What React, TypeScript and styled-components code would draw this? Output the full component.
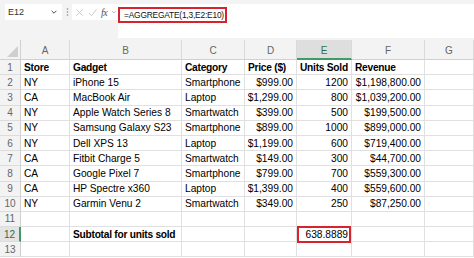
import React from "react";
import styled, { createGlobalStyle } from "styled-components";

const GlobalStyle = createGlobalStyle`
  html, body {
    margin: 0;
    padding: 0;
    background: #ffffff;
    overflow: hidden;
  }
  body {
    font-family: "Liberation Sans", Arial, sans-serif;
  }
`;

const Page = styled.div`
  width: 474px;
  height: 258px;
  overflow: hidden;
  background: #ffffff;
`;

const TopBar = styled.div`
  height: 40px;
  box-sizing: border-box;
  padding-top: 4px;
  background: #f3f3f3;
  display: flex;
  align-items: flex-start;
`;

const NameBox = styled.div`
  margin-left: 5px;
  width: 57px;
  height: 16px;
  box-sizing: border-box;
  padding: 0 4px 0 3px;
  background: #ffffff;
  display: flex;
  align-items: center;
  justify-content: space-between;
  font-size: 9px;
  color: #333333;
`;

const Grip = styled.div`
  width: 10px;
  height: 16px;
  display: flex;
  align-items: center;
  justify-content: center;
`;

const FxBox = styled.div`
  width: 46px;
  height: 16px;
  background: #ffffff;
  display: flex;
  align-items: center;
  gap: 4px;
  padding-left: 3px;
  box-sizing: border-box;
`;

const Fx = styled.span`
  font-family: "Liberation Serif", "Times New Roman", serif;
  font-style: italic;
  font-size: 10px;
  color: #555555;
  letter-spacing: -0.5px;
`;

const FormulaArea = styled.div`
  flex: 1;
  height: 34px;
  background: #ffffff;
`;

const FormulaText = styled.div`
  position: relative;
  display: inline-flex;
  align-items: center;
  height: 16px;
  box-sizing: border-box;
  padding: 0 3px 0 6px;
  font-size: 8.4px;
  letter-spacing: -0.2px;
  color: #111111;
  &::after {
    content: "";
    position: absolute;
    inset: 0;
    border: 2px solid #d7232e;
  }
`;

const Sheet = styled.div`
  display: grid;
  grid-template-columns: 21px 49px 112px 63px 52px 55px 73px 1fr;
  grid-template-rows: 20px;
  grid-auto-rows: 15.2px;
`;

const Corner = styled.div`
  background: #f3f3f3;
  border-right: 1px solid #d0d0d0;
  border-bottom: 1px solid #d0d0d0;
  box-sizing: border-box;
  display: flex;
  align-items: flex-end;
  justify-content: flex-end;
  padding: 0 2px 2px 0;
`;

const ColHeader = styled.div<{ $active?: boolean }>`
  background: ${(p) => (p.$active ? "#dedede" : "#f3f3f3")};
  border-right: 1px solid #dadada;
  border-bottom: ${(p) => (p.$active ? "2px solid #3f9a65" : "1px solid #d0d0d0")};
  box-sizing: border-box;
  display: flex;
  align-items: center;
  justify-content: center;
  padding-top: 2px;
  font-size: 10px;
  color: ${(p) => (p.$active ? "#2d6e48" : "#666666")};
`;

const RowHeader = styled.div<{ $active?: boolean }>`
  background: ${(p) => (p.$active ? "#e4e4e4" : "#f3f3f3")};
  border-right: ${(p) => (p.$active ? "2px solid #3f9a65" : "1px solid #d0d0d0")};
  border-bottom: 1px solid #dcdcdc;
  box-sizing: border-box;
  display: flex;
  align-items: center;
  justify-content: center;
  font-size: 10px;
  color: ${(p) => (p.$active ? "#2d6e48" : "#666666")};
`;

const Cell = styled.div<{ $right?: boolean; $bold?: boolean; $marked?: boolean }>`
  position: relative;
  border-right: 1px solid #e0e0e0;
  border-bottom: 1px solid #e0e0e0;
  box-sizing: border-box;
  display: flex;
  align-items: center;
  justify-content: ${(p) => (p.$right ? "flex-end" : "flex-start")};
  padding: ${(p) => (p.$right ? "0 3px 0 0" : "0 0 0 3px")};
  white-space: nowrap;
  overflow: visible;
  font-size: 10.2px;
  font-weight: ${(p) => (p.$bold ? 700 : 400)};
  letter-spacing: ${(p) => (p.$bold ? "-0.25px" : "0")};
  color: #000000;
  ${(p) =>
    p.$marked &&
    `
    &::after {
      content: "";
      position: absolute;
      left: 0;
      right: 0;
      top: -1px;
      bottom: -2px;
      border: 2px solid #d7232e;
    }
  `}
`;

const columns = ["A", "B", "C", "D", "E", "F", "G"];

type Row = { values: string[]; bold?: boolean };

const rows: Row[] = [
  { values: ["Store", "Gadget", "Category", "Price ($)", "Units Sold", "Revenue", ""], bold: true },
  { values: ["NY", "iPhone 15", "Smartphone", "$999.00", "1200", "$1,198,800.00", ""] },
  { values: ["CA", "MacBook Air", "Laptop", "$1,299.00", "800", "$1,039,200.00", ""] },
  { values: ["NY", "Apple Watch Series 8", "Smartwatch", "$399.00", "500", "$199,500.00", ""] },
  { values: ["NY", "Samsung Galaxy S23", "Smartphone", "$899.00", "1000", "$899,000.00", ""] },
  { values: ["NY", "Dell XPS 13", "Laptop", "$1,199.00", "600", "$719,400.00", ""] },
  { values: ["CA", "Fitbit Charge 5", "Smartwatch", "$149.00", "300", "$44,700.00", ""] },
  { values: ["CA", "Google Pixel 7", "Smartphone", "$799.00", "700", "$559,300.00", ""] },
  { values: ["CA", "HP Spectre x360", "Laptop", "$1,399.00", "400", "$559,600.00", ""] },
  { values: ["NY", "Garmin Venu 2", "Smartwatch", "$349.00", "250", "$87,250.00", ""] },
  { values: ["", "", "", "", "", "", ""] },
  { values: ["", "Subtotal for units sold", "", "", "638.8889", "", ""] },
  { values: ["", "", "", "", "", "", ""] },
];

const Chevron = ({ size = 7, color = "#555" }: { size?: number; color?: string }) => (
  <svg width={size} height={size} viewBox="0 0 10 10">
    <path d="M2 3.5 L5 6.5 L8 3.5" fill="none" stroke={color} strokeWidth="1.2" />
  </svg>
);

const App = () => (
  <Page>
    <GlobalStyle />
    <TopBar>
      <NameBox>
        <span>E12</span>
        <Chevron size={8} color="#444" />
      </NameBox>
      <Grip>
        <svg width="3" height="10" viewBox="0 0 3 10">
          <circle cx="1.5" cy="2" r="0.8" fill="#8a8a8a" />
          <circle cx="1.5" cy="5" r="0.8" fill="#8a8a8a" />
          <circle cx="1.5" cy="8" r="0.8" fill="#8a8a8a" />
        </svg>
      </Grip>
      <FxBox>
        <svg width="9" height="9" viewBox="0 0 10 10">
          <path d="M1.5 1.5 L8.5 8.5 M8.5 1.5 L1.5 8.5" stroke="#c4c4c4" strokeWidth="1" />
        </svg>
        <svg width="9" height="9" viewBox="0 0 10 10">
          <path d="M1 5.5 L4 8.5 L9.5 1.5" fill="none" stroke="#c4c4c4" strokeWidth="1" />
        </svg>
        <Fx>fx</Fx>
        <Chevron size={6} color="#999" />
      </FxBox>
      <FormulaArea>
        <FormulaText>=AGGREGATE(1,3,E2:E10)</FormulaText>
      </FormulaArea>
    </TopBar>
    <Sheet>
      <Corner>
        <svg width="11" height="11" viewBox="0 0 11 11">
          <polygon points="11,0 11,11 0,11" fill="#cfcfcf" />
        </svg>
      </Corner>
      {columns.map((c) => (
        <ColHeader key={c} $active={c === "E"}>
          {c}
        </ColHeader>
      ))}
      {rows.map((row, i) => (
        <React.Fragment key={i}>
          <RowHeader $active={i === 11}>{i + 1}</RowHeader>
          {row.values.map((v, j) => {
            const numeric = i > 0 && (j === 3 || j === 4 || j === 5);
            const bold = row.bold || (i === 11 && j === 1);
            return (
              <Cell key={j} $right={numeric} $bold={bold} $marked={i === 11 && j === 4}>
                {v}
              </Cell>
            );
          })}
        </React.Fragment>
      ))}
    </Sheet>
  </Page>
);

export default App;
